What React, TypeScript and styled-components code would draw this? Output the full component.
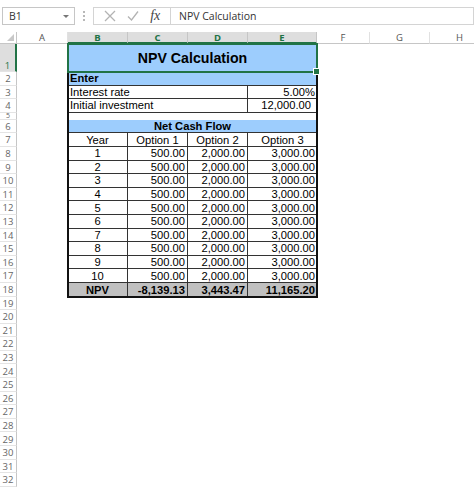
import React from "react";
import styled, { createGlobalStyle } from "styled-components";

const GlobalStyle = createGlobalStyle`
  html, body {
    margin: 0;
    padding: 0;
    background: #fff;
  }
  body {
    width: 474px;
    height: 489px;
    overflow: hidden;
    font-family: "Liberation Sans", Arial, sans-serif;
  }
`;

const GREEN = "#217346";
const BLUE = "#9dcdfd";
const LINE = "#333";

const Window = styled.div`
  width: 474px;
  height: 489px;
  overflow: hidden;
`;

const FormulaBar = styled.div`
  display: flex;
  align-items: flex-start;
  height: 32px;
  padding: 7px 0 0 2px;
  box-sizing: border-box;
  font-family: "Open Sans", "DejaVu Sans", sans-serif;
  font-size: 10.5px;
  color: #333;
`;

const NameBox = styled.div`
  width: 73px;
  height: 18px;
  box-sizing: border-box;
  border: 1px solid #c6c6c6;
  display: flex;
  align-items: center;
  justify-content: space-between;
  padding: 0 5px 0 6px;
`;

const Caret = styled.span`
  width: 0;
  height: 0;
  border-left: 3px solid transparent;
  border-right: 3px solid transparent;
  border-top: 3px solid #777;
`;

const Grip = styled.div`
  width: 18px;
  height: 18px;
  display: flex;
  flex-direction: column;
  align-items: center;
  justify-content: center;
  gap: 2px;

  span {
    width: 2px;
    height: 2px;
    background: #b8b8b8;
  }
`;

const FnBox = styled.div`
  width: 77px;
  height: 18px;
  box-sizing: border-box;
  border: 1px solid #d4d4d4;
  border-right: none;
  display: flex;
  align-items: center;
  justify-content: space-around;
  padding: 0 4px;
`;

const Fx = styled.span`
  font-family: "Liberation Serif", "Times New Roman", serif;
  font-style: italic;
  font-size: 14px;
  color: #444;
`;

const FormulaInput = styled.div`
  flex: 1;
  height: 18px;
  box-sizing: border-box;
  border: 1px solid #d4d4d4;
  display: flex;
  align-items: center;
  padding-left: 8px;
  white-space: nowrap;
`;

const Sheet = styled.div`
  display: grid;
  grid-template-columns: 17px 51px 60px 60px 60px 69px 53px 60px 60px;
  grid-template-rows: 12px 28px repeat(3, 13.6px) 7px repeat(27, 13.6px);
  font-family: "Open Sans", "DejaVu Sans", sans-serif;
`;

const Corner = styled.div`
  grid-column: 1;
  grid-row: 1;
  position: relative;
  border-right: 1px solid #c6c6c6;
  border-bottom: 1px solid #c6c6c6;
  background: #fff;

  &::after {
    content: "";
    position: absolute;
    right: 2px;
    bottom: 2px;
    border-left: 7px solid transparent;
    border-bottom: 7px solid #c8c8c8;
  }
`;

const ColHead = styled.div<{ $col: number; $sel?: boolean }>`
  grid-column: ${(p) => p.$col};
  grid-row: 1;
  display: flex;
  align-items: center;
  justify-content: center;
  box-sizing: border-box;
  font-size: 9.5px;
  font-weight: ${(p) => (p.$sel ? 700 : 400)};
  color: ${(p) => (p.$sel ? GREEN : "#555")};
  background: ${(p) => (p.$sel ? "#dedede" : "#fff")};
  border-right: 1px solid ${(p) => (p.$sel ? "#c6c6c6" : "#e1e1e1")};
  border-bottom: ${(p) => (p.$sel ? `2px solid ${GREEN}` : "1px solid #c6c6c6")};
`;

const RowHead = styled.div<{ $row: number; $sel?: boolean; $short?: boolean }>`
  grid-column: 1;
  grid-row: ${(p) => p.$row};
  display: flex;
  align-items: flex-end;
  justify-content: center;
  box-sizing: border-box;
  overflow: hidden;
  font-size: ${(p) => (p.$short ? "7px" : "9.5px")};
  line-height: ${(p) => (p.$short ? "7px" : "11.5px")};
  color: ${(p) => (p.$sel ? GREEN : "#666")};
  background: ${(p) => (p.$sel ? "#dedede" : "#fff")};
  border-right: ${(p) => (p.$sel ? `2px solid ${GREEN}` : "1px solid #c6c6c6")};
  border-bottom: 1px solid #e4e4e4;
`;

const Table = styled.div`
  grid-column: 3 / 7;
  grid-row: 2 / 20;
  display: grid;
  grid-template-columns: 60px 60px 60px 69px;
  grid-template-rows: 28px repeat(3, 13.6px) 7px repeat(13, 13.6px);
  outline: 2px solid #111;
  outline-offset: -1px;
  font-family: "Liberation Sans", Arial, sans-serif;
  font-size: 11.2px;
  color: #000;
`;

type Align = "left" | "center" | "right";

const Cell = styled.div<{
  $span?: number;
  $bg?: string;
  $align?: Align;
  $bold?: boolean;
  $size?: number;
  $r?: boolean;
  $b?: boolean;
  $pr?: number;
}>`
  grid-column: span ${(p) => p.$span ?? 1};
  display: flex;
  align-items: center;
  justify-content: ${(p) =>
    p.$align === "center" ? "center" : p.$align === "right" ? "flex-end" : "flex-start"};
  box-sizing: border-box;
  padding: 0 ${(p) => p.$pr ?? 2}px 0 2px;
  overflow: hidden;
  white-space: nowrap;
  background: ${(p) => p.$bg ?? "#fff"};
  font-weight: ${(p) => (p.$bold ? 700 : 400)};
  font-size: ${(p) => (p.$size ? `${p.$size}px` : "inherit")};
  border-right: ${(p) => (p.$r ? `1px solid ${LINE}` : "none")};
  border-bottom: ${(p) => (p.$b ? `1px solid ${LINE}` : "none")};
`;

const Selection = styled.div`
  grid-column: 3 / 7;
  grid-row: 2 / 3;
  margin: -1px;
  border: 2px solid ${GREEN};
  position: relative;
  z-index: 2;
  pointer-events: none;

  &::after {
    content: "";
    position: absolute;
    right: -4px;
    bottom: -4px;
    width: 5px;
    height: 5px;
    background: ${GREEN};
    border: 1px solid #fff;
  }
`;

const columns = ["A", "B", "C", "D", "E", "F", "G", "H"];
const years = [1, 2, 3, 4, 5, 6, 7, 8, 9, 10];
const npv = ["-8,139.13", "3,443.47", "11,165.20"];

function CancelIcon() {
  return (
    <svg width="12" height="12" viewBox="0 0 12 12">
      <path d="M1 1 L11 11 M11 1 L1 11" stroke="#b3b3b3" strokeWidth="1.3" fill="none" />
    </svg>
  );
}

function EnterIcon() {
  return (
    <svg width="12" height="12" viewBox="0 0 12 12">
      <path d="M1 6.5 L4.5 10 L11 1.5" stroke="#b3b3b3" strokeWidth="1.3" fill="none" />
    </svg>
  );
}

export default function App() {
  return (
    <Window>
      <GlobalStyle />
      <FormulaBar>
        <NameBox>
          B1
          <Caret />
        </NameBox>
        <Grip>
          <span />
          <span />
          <span />
        </Grip>
        <FnBox>
          <CancelIcon />
          <EnterIcon />
          <Fx>fx</Fx>
        </FnBox>
        <FormulaInput>NPV Calculation</FormulaInput>
      </FormulaBar>

      <Sheet>
        <Corner />
        {columns.map((c, i) => (
          <ColHead key={c} $col={i + 2} $sel={i >= 1 && i <= 4}>
            {c}
          </ColHead>
        ))}
        {Array.from({ length: 32 }, (_, i) => (
          <RowHead key={i} $row={i + 2} $sel={i === 0} $short={i === 4}>
            {i + 1}
          </RowHead>
        ))}

        <Table>
          <Cell $span={4} $bg={BLUE} $align="center" $bold $size={14.2} $b>
            NPV Calculation
          </Cell>

          <Cell $span={4} $bg={BLUE} $bold $b>
            Enter
          </Cell>

          <Cell $span={3} $r $b>
            Interest rate
          </Cell>
          <Cell $align="right" $b>
            5.00%
          </Cell>

          <Cell $span={3} $r $b>
            Initial investment
          </Cell>
          <Cell $align="right" $b $pr={6}>
            12,000.00
          </Cell>

          <Cell $span={4} />

          <Cell $span={4} $bg={BLUE} $align="center" $bold $b>
            Net Cash Flow
          </Cell>

          <Cell $align="center" $r $b>
            Year
          </Cell>
          <Cell $align="center" $r $b>
            Option 1
          </Cell>
          <Cell $align="center" $r $b>
            Option 2
          </Cell>
          <Cell $align="center" $b>
            Option 3
          </Cell>

          {years.map((y) => (
            <React.Fragment key={y}>
              <Cell $align="center" $r $b>
                {y}
              </Cell>
              <Cell $align="right" $r $b>
                500.00
              </Cell>
              <Cell $align="right" $r $b>
                2,000.00
              </Cell>
              <Cell $align="right" $b>
                3,000.00
              </Cell>
            </React.Fragment>
          ))}

          <Cell $align="center" $r $bold $bg="#c0c0c0">
            NPV
          </Cell>
          {npv.map((v, i) => (
            <Cell key={v} $align="right" $r={i < 2} $bold $bg="#c0c0c0">
              {v}
            </Cell>
          ))}
        </Table>

        <Selection />
      </Sheet>
    </Window>
  );
}
